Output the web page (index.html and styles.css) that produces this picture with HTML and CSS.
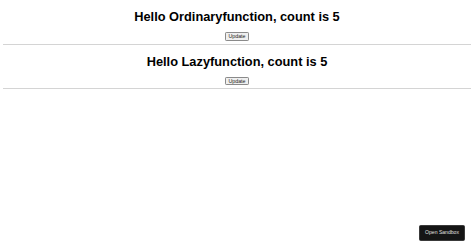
FILE: index.html
```html
<!DOCTYPE html>
<html>
<head>
<meta charset="utf-8">
<link rel="stylesheet" href="styles.css">
</head>
<body>
<div class="app">
  <h1 class="title">Hello Ordinaryfunction, count is 5</h1>
  <div class="row"><button class="btn">Update</button></div>
  <hr class="rule">
  <h1 class="title">Hello Lazyfunction, count is 5</h1>
  <div class="row"><button class="btn">Update</button></div>
  <hr class="rule">
</div>
<a class="sandbox">Open Sandbox</a>
</body>
</html>
```
FILE: styles.css
```css
html, body {
  background: #fff;
}
body {
  margin: 0;
  font-family: "Liberation Sans", Arial, sans-serif;
  font-size: 6.4px;
  color: #000;
}
.app {
  padding: 0.1px 3.2px 0;
  text-align: center;
}
.title {
  font-size: 12.8px;
  font-weight: bold;
  line-height: 14.7px;
  margin: 10px 0 7.4px;
}
.row {
  display: flex;
  justify-content: center;
  height: 8.4px;
}
.btn {
  box-sizing: border-box;
  height: 8.4px;
  display: flex;
  align-items: center;
  font-family: "Liberation Sans", Arial, sans-serif;
  font-size: 5.3px;
  padding: 0 2.4px;
  border: 0.8px solid #8a8a8a;
  border-radius: 1.2px;
  background: #efefef;
  color: #222;
}
.rule {
  margin: 3px 0 0;
  border: none;
  border-top: 1px solid #d4d4d4;
  height: 0;
}
.sandbox {
  position: fixed;
  right: 9px;
  bottom: 7px;
  background: #151515;
  color: #e0e0e0;
  font-family: "Liberation Sans", Arial, sans-serif;
  font-size: 5.1px;
  line-height: 5.9px;
  padding: 4px 5px;
  border-radius: 1.6px;
  border: 0.4px solid #3a3a3a;
}
```
